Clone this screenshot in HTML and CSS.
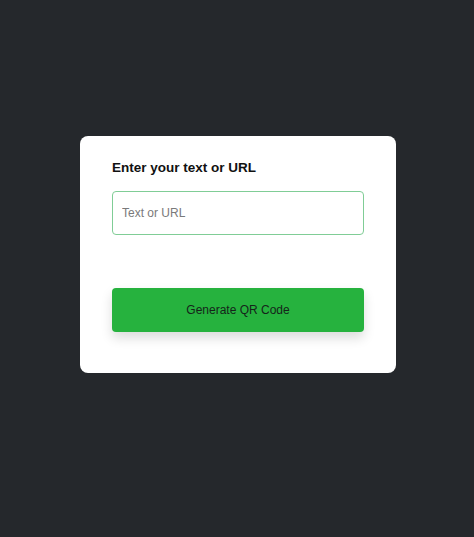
FILE: index.html
```html
<!DOCTYPE html>
<html>
<head>
<meta charset="utf-8">
<link rel="stylesheet" href="styles.css">
</head>
<body>
<main class="page">
  <section class="card">
    <label class="title" for="q">Enter your text or URL</label>
    <input id="q" class="field" type="text" placeholder="Text or URL">
    <button class="btn" type="button">Generate QR Code</button>
  </section>
</main>
</body>
</html>
```
FILE: styles.css
```css
html, body {
  margin: 0;
  padding: 0;
  height: 100%;
}
body {
  background: #25282c;
  font-family: "Liberation Sans", Arial, sans-serif;
}
.page {
  height: 537px;
  display: flex;
  justify-content: center;
  padding: 136px 0 0 2px;
  box-sizing: border-box;
}
.card {
  width: 316px;
  height: 237px;
  box-sizing: border-box;
  background: #ffffff;
  border-radius: 8px;
  padding: 23px 32px 0 32px;
  display: flex;
  flex-direction: column;
}
.title {
  font-size: 13.5px;
  font-weight: bold;
  color: #111;
  line-height: 18px;
  margin-bottom: 14px;
}
.field {
  height: 44px;
  box-sizing: border-box;
  border: 1px solid #80cd96;
  border-radius: 4px;
  padding: 0 9px;
  font-family: "Liberation Sans", Arial, sans-serif;
  font-size: 12px;
  color: #333;
  outline: none;
  margin-bottom: 53px;
}
.field::placeholder {
  color: #7a7a7a;
}
.btn {
  height: 44px;
  border: none;
  border-radius: 4px;
  background: #26b23e;
  color: #15241a;
  font-family: "Liberation Sans", Arial, sans-serif;
  font-size: 12px;
  box-shadow: 0 6px 12px rgba(0, 0, 0, 0.14);
  cursor: pointer;
}
```
